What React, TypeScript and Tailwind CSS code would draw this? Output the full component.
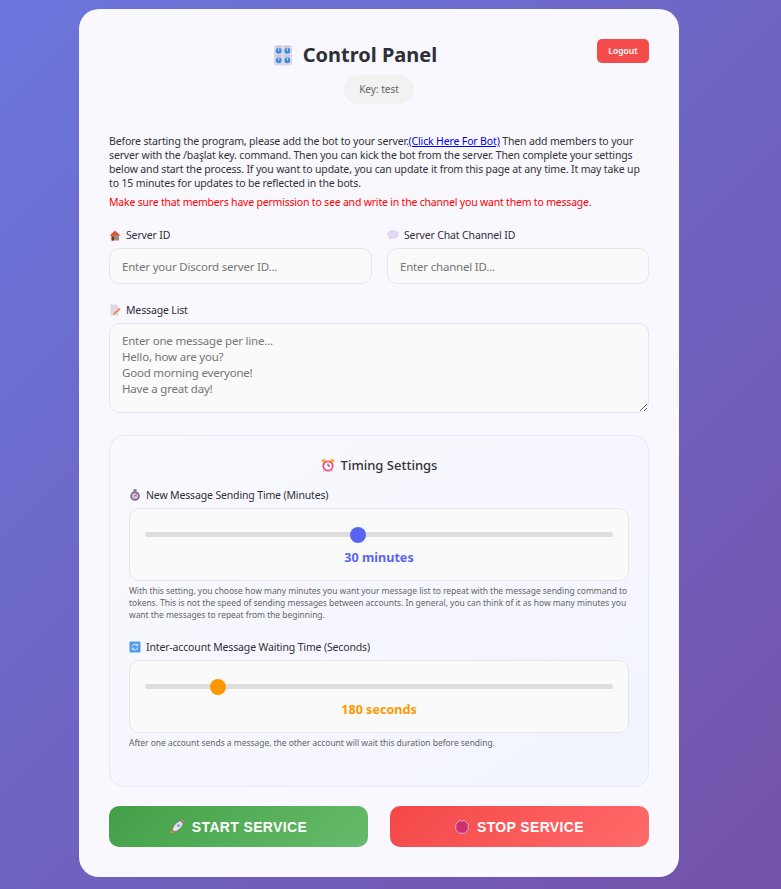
import React from "react";

const inputClass =
  "w-full h-9 rounded-[10px] border border-[#e6e6ee] bg-[#fafafa] px-3 text-[11.500px] tracking-[-0.2px] text-[#333] outline-none placeholder:text-[#757575]";
const labelClass = "flex items-center gap-[5px] text-[10.500px] tracking-[-0.15px] leading-[14px] font-normal text-[#2f2f38]";

function ControlKnobs() {
  return (
    <svg viewBox="0 0 20 22" className="h-[21px] w-[20px]" aria-hidden>
      <rect x="0.5" y="0.5" width="19" height="21" rx="2.5" fill="#ddd6ec" />
      {[5.5, 14.5].map((x) =>
        [6, 16].map((y) => (
          <g key={`${x}-${y}`}>
            <circle cx={x} cy={y} r="3.1" fill="#3f8fd8" />
            <path d={`M${x} ${y - 2.6}V${y}`} stroke="#dcecf8" strokeWidth="1" />
            <path d={`M${x - 3} ${y - 4.6}h6`} stroke="#8a8fa8" strokeWidth="0.8" strokeDasharray="1 1" />
          </g>
        ))
      )}
    </svg>
  );
}

function HouseIcon() {
  return (
    <svg viewBox="0 0 12 12" className="h-3 w-3" aria-hidden>
      <path d="M2 6h8v5.500H2z" fill="#c9835a" />
      <path d="M0.500 6.500 6 1.500l5.500 5z" fill="#d9583f" />
      <rect x="3" y="7.500" width="2" height="4" fill="#5b3a2a" />
      <rect x="6.500" y="7.500" width="2.500" height="2" fill="#4aa3e0" />
    </svg>
  );
}

function BubbleIcon() {
  return (
    <svg viewBox="0 0 12 12" className="h-3 w-3" aria-hidden>
      <ellipse cx="6" cy="5.500" rx="5.200" ry="3.800" fill="#e3d9f5" stroke="#c8b8ea" strokeWidth="0.500" />
      <path d="M3 8.300 2 10.500l3-1.500z" fill="#d6c9f0" />
    </svg>
  );
}

function MemoIcon() {
  return (
    <svg viewBox="0 0 12 12" className="h-3 w-3" aria-hidden>
      <path d="M1.500 0.500h6l2 2v9h-8z" fill="#ddd8e6" />
      <path d="M4.500 9.500 10.500 4l1 1-6 5.500-1.500.500z" fill="#ef7a3c" />
    </svg>
  );
}

function AlarmIcon() {
  return (
    <svg viewBox="0 0 14 15" className="h-[15px] w-[14px]" aria-hidden>
      <circle cx="2.800" cy="2.800" r="2" fill="#f2b632" />
      <circle cx="11.200" cy="2.800" r="2" fill="#f2b632" />
      <path d="M3 12.500 2 14.500M11 12.500l1 2" stroke="#d9c7e8" strokeWidth="1.400" />
      <circle cx="7" cy="8" r="5.600" fill="#ee4f78" />
      <circle cx="7" cy="8" r="3.800" fill="#fdf3f5" />
      <path d="M7 5.500V8h2" stroke="#3a3a48" strokeWidth="0.900" fill="none" />
    </svg>
  );
}

function StopwatchIcon() {
  return (
    <svg viewBox="0 0 12 12" className="h-3 w-3" aria-hidden>
      <rect x="4.500" y="0.300" width="3" height="1.500" fill="#6d5a78" />
      <circle cx="6" cy="7" r="4.700" fill="#6d5a78" />
      <circle cx="6" cy="7" r="3.300" fill="#c9b8d4" />
      <path d="M6 7 8 5" stroke="#d8457a" strokeWidth="1" />
    </svg>
  );
}

function RepeatIcon() {
  return (
    <svg viewBox="0 0 12 12" className="h-3 w-3" aria-hidden>
      <rect x="0.500" y="0.500" width="11" height="11" rx="1" fill="#4c9bea" />
      <path d="M3 5.500a3 3 0 0 1 5.500-1M9 6.500a3 3 0 0 1-5.500 1" stroke="#e6f2fd" strokeWidth="1" fill="none" />
      <path d="M8.800 2.500v2.300H6.600M3.200 9.500V7.200h2.200" stroke="#e6f2fd" strokeWidth="0.800" fill="none" />
    </svg>
  );
}

function RocketIcon() {
  return (
    <svg viewBox="0 0 14 14" className="h-[14px] w-[14px]" aria-hidden>
      <path d="M0.500 13.500l.8-3.500 2.700 2.700z" fill="#f08a3c" />
      <path d="M3.500 6 1 8.500l2.500 1zM8 10.500 5.500 13l-1-2.500z" fill="#ee4f78" />
      <path d="M2.800 9.500C3.800 4.800 8 1 13.500 0.500c-.500 5.500-4.300 9.700-9 10.700z" fill="#e8dff0" />
      <path d="M10 0.900 13.500 0.500 13.100 4z" fill="#ee4f78" />
      <circle cx="8.500" cy="5.500" r="1.600" fill="#7fa7e6" />
    </svg>
  );
}

function StopIcon() {
  return (
    <svg viewBox="0 0 14 14" className="h-[14px] w-[14px]" aria-hidden>
      <path d="M4.200 0.800h5.600l3.400 3.400v5.600l-3.400 3.400H4.200L.8 9.800V4.200z" fill="#cf2e70" stroke="#d8c8e0" strokeWidth="0.800" />
    </svg>
  );
}

function SliderBox({
  min,
  max,
  value,
  text,
  thumbClass,
  textClass,
}: {
  min: number;
  max: number;
  value: number;
  text: string;
  thumbClass: string;
  textClass: string;
}) {
  return (
    <div className="h-[73px] rounded-[10px] border border-[#e6e6ee] bg-[#fafafa] px-[15px] pt-4">
      <input
        type="range"
        min={min}
        max={max}
        defaultValue={value}
        className={`mt-[7px] block h-[5px] w-full cursor-pointer appearance-none rounded-[3px] bg-[#dddddd] outline-none [&::-webkit-slider-thumb]:h-4 [&::-webkit-slider-thumb]:w-4 [&::-webkit-slider-thumb]:appearance-none [&::-webkit-slider-thumb]:rounded-full ${thumbClass}`}
      />
      <div className={`mt-[12px] text-center text-[12.600px] leading-[18px] font-bold ${textClass}`}>{text}</div>
    </div>
  );
}

export default function App() {
  return (
    <div
      className="min-h-[889px] bg-[linear-gradient(135deg,#6a76dc,#7352a9)] pt-[9px] pr-[23px] pb-3"
      style={{ fontFamily: '"Noto Sans", sans-serif' }}
    >
      <div className="mx-auto h-[868px] w-[600px] rounded-[20px] bg-[#f8f8fe] px-[30px] pt-[30px]">
        <div className="flex items-start">
          <h1 className="flex flex-1 items-center justify-center gap-[10px] pt-[2px] pl-1 text-[20px] leading-[28px] font-bold text-[#2d3038]">
            <ControlKnobs />
            Control Panel
          </h1>
          <button type="button" className="h-6 w-[52px] rounded-[5px] bg-[#f44b4b] text-[8.500px] font-semibold text-white">
            Logout
          </button>
        </div>

        <div className="mt-[6px] flex justify-center">
          <span className="rounded-[15px] bg-[#f2f2f2] px-[15px] py-[7px] text-[10px] leading-[15px] text-[#666]">
            Key: test
          </span>
        </div>

        <p className="mt-[30px] text-[10.500px] leading-[14px] tracking-[-0.15px] text-[#333]">
          Before starting the program, please add the bot to your server.
          <a href="#bot" className="text-[#0000ee] underline">
            (Click Here For Bot)
          </a>{" "}
          Then add members to your server with the /başlat key. command. Then you can kick the bot from the server. Then
          complete your settings below and start the process. If you want to update, you can update it from this page at
          any time. It may take up to 15 minutes for updates to be reflected in the bots.
        </p>
        <p className="mt-[5px] text-[10.500px] leading-[14px] tracking-[-0.2px] text-[#ff0000]">
          Make sure that members have permission to see and write in the channel you want them to message.
        </p>

        <div className="mt-[19px] grid grid-cols-[263px_262px] gap-[15px]">
          <div>
            <label className={labelClass}>
              <HouseIcon />
              Server ID
            </label>
            <input className={`${inputClass} mt-[6px]`} placeholder="Enter your Discord server ID..." />
          </div>
          <div>
            <label className={labelClass}>
              <BubbleIcon />
              Server Chat Channel ID
            </label>
            <input className={`${inputClass} mt-[6px]`} placeholder="Enter channel ID..." />
          </div>
        </div>

        <label className={`${labelClass} mt-[19px]`}>
          <MemoIcon />
          Message List
        </label>
        <textarea
          className="mt-[6px] block h-[90px] w-full rounded-[10px] border border-[#e6e6ee] bg-[#fafafa] px-3 py-[9px] text-[11.500px] leading-[16px] tracking-[-0.2px] text-[#333] outline-none placeholder:text-[#757575]"
          placeholder={"Enter one message per line...\nHello, how are you?\nGood morning everyone!\nHave a great day!"}
        />

        <section className="mt-[22px] h-[352px] rounded-[15px] border border-[#e6e9fb] bg-gradient-to-br from-[#f9f9fe] to-[#f2f4fe] px-[19px] pt-5">
          <h2 className="flex items-center justify-center gap-[6px] text-[13px] leading-[18px] font-medium text-[#333]">
            <AlarmIcon />
            Timing Settings
          </h2>

          <label className={`${labelClass} mt-[14px]`}>
            <StopwatchIcon />
            New Message Sending Time (Minutes)
          </label>
          <div className="mt-[6px]">
            <SliderBox
              min={5}
              max={60}
              value={30}
              text="30 minutes"
              thumbClass="[&::-webkit-slider-thumb]:bg-[#5865f2]"
              textClass="text-[#5865f2]"
            />
          </div>
          <p className="mt-[4px] text-[8.500px] leading-[12px] tracking-[-0.04px] text-[#666]">
            With this setting, you choose how many minutes you want your message list to repeat with the message sending
            command to tokens. This is not the speed of sending messages between accounts. In general, you can think of it
            as how many minutes you want the messages to repeat from the beginning.
          </p>

          <label className={`${labelClass} mt-[19px]`}>
            <RepeatIcon />
            Inter-account Message Waiting Time (Seconds)
          </label>
          <div className="mt-[6px]">
            <SliderBox
              min={60}
              max={900}
              value={180}
              text="180 seconds"
              thumbClass="[&::-webkit-slider-thumb]:bg-[#ff9800]"
              textClass="text-[#ff9800]"
            />
          </div>
          <p className="mt-[4px] text-[8.500px] leading-[12px] tracking-[-0.04px] text-[#666]">
            After one account sends a message, the other account will wait this duration before sending.
          </p>
        </section>

        <div className="mt-[19px] grid grid-cols-[259px_259px] gap-[22px]">
          <button
            type="button"
            className="flex h-[41px] items-center justify-center gap-2 rounded-[10px] bg-[linear-gradient(135deg,#43a047,#66bb6a)] pt-px text-[14px] font-bold tracking-[0.35px] text-white"
            style={{ fontFamily: '"Liberation Sans", sans-serif' }}
          >
            <RocketIcon />
            START SERVICE
          </button>
          <button
            type="button"
            className="flex h-[41px] items-center justify-center gap-2 rounded-[10px] bg-[linear-gradient(135deg,#f44747,#ff6b6b)] pt-px text-[14px] font-bold tracking-[0.35px] text-white"
            style={{ fontFamily: '"Liberation Sans", sans-serif' }}
          >
            <StopIcon />
            STOP SERVICE
          </button>
        </div>
      </div>
    </div>
  );
}
